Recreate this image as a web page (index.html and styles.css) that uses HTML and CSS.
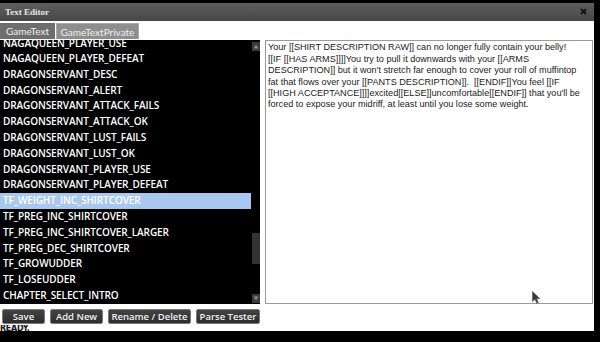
FILE: index.html
```html
<!DOCTYPE html>
<html>
<head>
<meta charset="utf-8">
<link rel="stylesheet" href="styles.css">
</head>
<body>
<div class="window">
  <div class="titlebar">
    <span class="title">Text Editor</span>
    <svg class="close" width="7" height="7" viewBox="0 0 7 7"><path d="M1 1L6 6M6 1L1 6" stroke="#111" stroke-width="1.8"/></svg>
  </div>
  <div class="tabs">
    <div class="tab tab-active">GameText</div>
    <div class="tab tab-alt">GameTextPrivate</div>
  </div>
  <div class="main">
    <div class="listbox">
      <div class="items">
        <div class="item partial">NAGAQUEEN_PLAYER_USE</div>
        <div class="item">NAGAQUEEN_PLAYER_DEFEAT</div>
        <div class="item">DRAGONSERVANT_DESC</div>
        <div class="item">DRAGONSERVANT_ALERT</div>
        <div class="item">DRAGONSERVANT_ATTACK_FAILS</div>
        <div class="item">DRAGONSERVANT_ATTACK_OK</div>
        <div class="item">DRAGONSERVANT_LUST_FAILS</div>
        <div class="item">DRAGONSERVANT_LUST_OK</div>
        <div class="item">DRAGONSERVANT_PLAYER_USE</div>
        <div class="item">DRAGONSERVANT_PLAYER_DEFEAT</div>
        <div class="item selected">TF_WEIGHT_INC_SHIRTCOVER</div>
        <div class="item">TF_PREG_INC_SHIRTCOVER</div>
        <div class="item">TF_PREG_INC_SHIRTCOVER_LARGER</div>
        <div class="item">TF_PREG_DEC_SHIRTCOVER</div>
        <div class="item">TF_GROWUDDER</div>
        <div class="item">TF_LOSEUDDER</div>
        <div class="item">CHAPTER_SELECT_INTRO</div>
      </div>
      <div class="scrollbar">
        <div class="sb-btn"><svg width="6" height="5" viewBox="0 0 6 5"><path d="M3 0.5L5.5 4.5H0.5Z" fill="#8a8a8a"/></svg></div>
        <div class="sb-track"><div class="sb-thumb"></div></div>
        <div class="sb-btn"><svg width="6" height="5" viewBox="0 0 6 5"><path d="M3 4.5L5.5 0.5H0.5Z" fill="#8a8a8a"/></svg></div>
      </div>
    </div>
    <div class="textbox">Your [[SHIRT DESCRIPTION RAW]] can no longer fully contain your belly!<br>[[IF [[HAS ARMS]]]]You try to pull it downwards with your [[ARMS<br>DESCRIPTION]] but it won't stretch far enough to cover your roll of muffintop<br>fat that flows over your [[PANTS DESCRIPTION]].&nbsp; [[ENDIF]]You feel [[IF<br>[[HIGH ACCEPTANCE]]]]excited[[ELSE]]uncomfortable[[ENDIF]] that you'll be<br>forced to expose your midriff, at least until you lose some weight.</div>
  </div>
  <div class="buttons">
    <div class="btn btn-save">Save</div>
    <div class="btn btn-add">Add New</div>
    <div class="btn btn-rename">Rename / Delete</div>
    <div class="btn btn-parse">Parse Tester</div>
  </div>
  <div class="status"><span>READY.</span></div>
</div>
<svg class="cursor" width="9" height="13" viewBox="0 0 9 13"><path d="M0.5 0.5L0.5 10.5L3 8.3L4.8 12.3L6.3 11.6L4.6 7.8L7.8 7.6Z" fill="#3a3a3a" stroke="#555" stroke-width="0.6"/></svg>
</body>
</html>
```

FILE: styles.css
```css
html, body {
  margin: 0;
  padding: 0;
}
body {
  background: #000;
  width: 600px;
  height: 342px;
  overflow: hidden;
  position: relative;
  font-family: "Open Sans", "DejaVu Sans", sans-serif;
}
.window {
  width: 594px;
  height: 328px;
  margin-top: 3px;
  background: #fff;
  display: flex;
  flex-direction: column;
  overflow: hidden;
}
.titlebar {
  height: 18px;
  flex: none;
  background: linear-gradient(#5e5e5e, #474747);
  display: flex;
  align-items: center;
  justify-content: space-between;
  padding: 0 7px 0 5px;
}
.title {
  font-family: "Liberation Serif", "DejaVu Serif", serif;
  font-weight: bold;
  font-size: 9px;
  color: #e8e8e8;
}
.close {
  display: block;
  margin-top: -2px;
}
.tabs {
  display: flex;
  margin-top: 2px;
  height: 16px;
  flex: none;
}
.tab {
  font-family: Lato, "Open Sans", sans-serif;
  font-size: 10px;
  color: #f0f0f0;
  display: flex;
  align-items: center;
  justify-content: center;
  box-sizing: border-box;
  height: 16px;
  white-space: nowrap;
}
.tab-active {
  width: 55px;
  background: #6e6e6e;
}
.tab-alt {
  width: 83px;
  margin-left: 1px;
  background: #8e8e8e;
  border: 1px solid #aaa;
  border-bottom: none;
}
.main {
  display: flex;
  height: 264px;
  margin-top: 1px;
  flex: none;
  gap: 5px;
}
.listbox {
  width: 260px;
  background: #000;
  display: flex;
  overflow: hidden;
}
.items {
  width: 252px;
}
.item {
  height: 15.8px;
  line-height: 15.8px;
  font-size: 10px;
  font-weight: 600;
  color: #fff;
  padding-left: 3px;
  white-space: nowrap;
  letter-spacing: -0.1px;
}
.item.partial {
  height: 11.1px;
  line-height: 6.4px;
  overflow: hidden;
}
.item.selected {
  background: #a9c8f0;
  width: 248px;
}
.scrollbar {
  width: 8px;
  display: flex;
  flex-direction: column;
  padding: 2px 0 1px;
  box-sizing: border-box;
}
.sb-btn {
  height: 9px;
  background: #3a3a3a;
  display: flex;
  align-items: center;
  justify-content: center;
  flex: none;
}
.sb-track {
  flex: 1;
  display: flex;
  flex-direction: column;
  justify-content: flex-end;
  padding-bottom: 30px;
}
.sb-thumb {
  height: 31px;
  background: #333;
}
.textbox {
  width: 328px;
  box-sizing: border-box;
  border: 1px solid #9a9a9a;
  padding: 1.3px 4px 0 2px;
  font-family: "Liberation Sans", Arial, sans-serif;
  font-size: 9.1px;
  line-height: 11.4px;
  color: #1a1a1a;
  white-space: nowrap;
  overflow: hidden;
}
.buttons {
  display: flex;
  gap: 5px;
  margin-top: 5px;
  padding-left: 2px;
  flex: none;
}
.btn {
  height: 15px;
  box-sizing: border-box;
  background: linear-gradient(#444, #2c2c2c);
  border: 1px solid #7a7a7a;
  border-radius: 2px;
  color: #f2f2f2;
  font-size: 9.5px;
  font-weight: 600;
  display: flex;
  align-items: center;
  justify-content: center;
  white-space: nowrap;
}
.btn-save { width: 43px; }
.btn-add { width: 53px; }
.btn-rename { width: 83px; }
.btn-parse { width: 64px; }
.status {
  height: 7px;
  overflow: hidden;
  margin-top: 1px;
}
.status span {
  display: block;
  font-family: "DejaVu Sans", sans-serif;
  font-weight: bold;
  font-size: 8px;
  line-height: 8px;
  color: #111;
  letter-spacing: -0.3px;
}
.cursor {
  position: absolute;
  left: 532px;
  top: 291px;
}
```
